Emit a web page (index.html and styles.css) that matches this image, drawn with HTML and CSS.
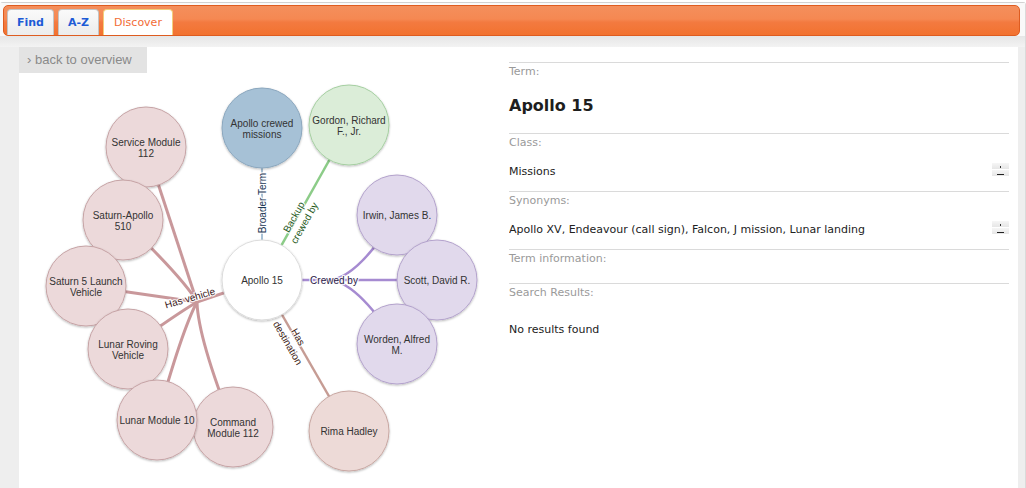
FILE: index.html
```html
<!DOCTYPE html>
<html>
<head>
<meta charset="utf-8">
<title>Discover</title>
<link rel="stylesheet" href="styles.css">
</head>
<body>
<div class="app">
  <div class="top">
    <div class="tabbar">
      <div class="tab tab-find">Find</div>
      <div class="tab tab-az">A-Z</div>
      <div class="tab tab-discover">Discover</div>
    </div>
  </div>
  <div class="main">
    <div class="panel">
      <div class="left">
        <div class="back">› back to overview</div>
        <svg class="graph" viewBox="19 73 490 415" width="490" height="415" xmlns="http://www.w3.org/2000/svg">
          <defs>
            <filter id="sh" x="-30%" y="-30%" width="160%" height="170%">
              <feDropShadow dx="0" dy="1" stdDeviation="1.3" flood-color="#000" flood-opacity="0.28"/>
            </filter>
          </defs>
          <g class="edges">
            <path class="e e-blue" d="M262,128 L262,280"/>
            <path class="e e-green" d="M349,125 L262,280"/>
            <path class="e e-purple" d="M262,280 L437,280"/>
            <path class="e e-purple" d="M328,280 Q356,280 397,215"/>
            <path class="e e-purple" d="M328,280 Q356,280 397,344"/>
            <path class="e e-rose" d="M262,280 L197,302"/>
            <path class="e e-rose" d="M197,302 Q180,250 146,147"/>
            <path class="e e-rose" d="M197,302 Q185,280 123,220"/>
            <path class="e e-rose" d="M197,302 Q170,298 86,286"/>
            <path class="e e-rose" d="M197,302 Q175,315 128,349"/>
            <path class="e e-rose" d="M197,302 Q182,330 157,420"/>
            <path class="e e-rose" d="M197,302 Q198,338 233,427"/>
            <path class="e e-dest" d="M262,280 L349,431"/>
          </g>
          <g class="elabels">
            <text class="el el-blue" transform="translate(262,203) rotate(-90)" text-anchor="middle" dominant-baseline="central">Broader Term</text>
            <text class="el el-green" transform="translate(299,220) rotate(-60.7)" text-anchor="middle"><tspan x="0" y="-2.5">Backup</tspan><tspan x="0" y="9.5">crewed by</tspan></text>
            <text class="el el-purple" x="334" y="280" text-anchor="middle" dominant-baseline="central">Crewed by</text>
            <text class="el el-rose" transform="translate(190,298) rotate(-16)" text-anchor="middle" dominant-baseline="central">Has vehicle</text>
            <text class="el el-dest" transform="translate(293,340) rotate(60)" text-anchor="middle"><tspan x="0" y="-2.5">Has</tspan><tspan x="0" y="9.5">destination</tspan></text>
          </g>
          <g class="nodes">
            <circle class="n n-veh" cx="146" cy="147" r="40"/>
            <circle class="n n-veh" cx="123" cy="220" r="40"/>
            <circle class="n n-veh" cx="86" cy="286" r="40"/>
            <circle class="n n-veh" cx="128" cy="349" r="40"/>
            <circle class="n n-veh" cx="233" cy="427" r="40"/>
            <circle class="n n-veh" cx="157" cy="420" r="40"/>
            <circle class="n n-blue" cx="262" cy="128" r="40"/>
            <circle class="n n-green" cx="349" cy="125" r="40"/>
            <circle class="n n-purple" cx="397" cy="215" r="40"/>
            <circle class="n n-purple" cx="437" cy="280" r="40"/>
            <circle class="n n-purple" cx="397" cy="344" r="40"/>
            <circle class="n n-dest" cx="349" cy="431" r="40"/>
            <circle class="n n-center" cx="262" cy="280" r="40"/>
          </g>
          <g class="nlabels">
            <text class="nl" x="146" y="141.5"><tspan x="146" dy="0">Service Module</tspan><tspan x="146" dy="11.5">112</tspan></text>
            <text class="nl" x="123" y="214.5"><tspan x="123" dy="0">Saturn-Apollo</tspan><tspan x="123" dy="11.5">510</tspan></text>
            <text class="nl" x="86" y="280.5"><tspan x="86" dy="0">Saturn 5 Launch</tspan><tspan x="86" dy="11.5">Vehicle</tspan></text>
            <text class="nl" x="128" y="343.5"><tspan x="128" dy="0">Lunar Roving</tspan><tspan x="128" dy="11.5">Vehicle</tspan></text>
            <text class="nl" x="157" y="420">Lunar Module 10</text>
            <text class="nl" x="233" y="421.5"><tspan x="233" dy="0">Command</tspan><tspan x="233" dy="11.5">Module 112</tspan></text>
            <text class="nl" x="262" y="122.5"><tspan x="262" dy="0">Apollo crewed</tspan><tspan x="262" dy="11.5">missions</tspan></text>
            <text class="nl" x="349" y="119.5"><tspan x="349" dy="0">Gordon, Richard</tspan><tspan x="349" dy="11.5">F., Jr.</tspan></text>
            <text class="nl" x="397" y="215">Irwin, James B.</text>
            <text class="nl" x="437" y="280">Scott, David R.</text>
            <text class="nl" x="397" y="338.5"><tspan x="397" dy="0">Worden, Alfred</tspan><tspan x="397" dy="11.5">M.</tspan></text>
            <text class="nl" x="349" y="431">Rima Hadley</text>
            <text class="nl" x="262" y="280">Apollo 15</text>
          </g>
        </svg>
      </div>
      <div class="right">
        <div class="sec sec-term">
          <div class="lbl">Term:</div>
          <div class="title">Apollo 15</div>
        </div>
        <div class="sec sec-row">
          <div class="lbl">Class:</div>
          <div class="row">
            <span class="val">Missions</span>
            <span class="mini"><span class="mini-top"></span><span class="mini-bot"></span></span>
          </div>
        </div>
        <div class="sec sec-row">
          <div class="lbl">Synonyms:</div>
          <div class="row">
            <span class="val">Apollo XV, Endeavour (call sign), Falcon, J mission, Lunar landing</span>
            <span class="mini"><span class="mini-top"></span><span class="mini-bot"></span></span>
          </div>
        </div>
        <div class="sec sec-info">
          <div class="lbl">Term information:</div>
        </div>
        <div class="sec sec-results">
          <div class="lbl">Search Results:</div>
          <div class="noresults">No results found</div>
        </div>
      </div>
    </div>
  </div>
</div>
</body>
</html>
```
FILE: styles.css
```css
* { box-sizing: border-box; }
html, body { margin: 0; padding: 0; }
body {
  background: #fff;
  width: 1026px;
  height: 488px;
  overflow: hidden;
  font-family: "DejaVu Sans", Verdana, sans-serif;
}
.app {
  margin-top: 2px;
  height: 486px;
  border-top: 1px solid #d2d2d2;
  border-right: 1px solid #dadada;
  border-radius: 3px 3px 0 0;
  background: #eee;
  display: flex;
  flex-direction: column;
}
.top {
  padding: 2px 5px 0 3px;
  background: #f9f9f9;
}
.tabbar {
  height: 31px;
  border: 1px solid #de5c20;
  border-radius: 5px;
  background: linear-gradient(#f48f5c 0%, #f58852 45%, #f37a40 56%, #f2722f 100%);
  display: flex;
  align-items: flex-end;
  gap: 4px;
  padding-left: 3px;
}
.tab {
  height: 26px;
  border: 1px solid #c4c4c4;
  border-bottom: 0;
  border-radius: 4px 4px 0 0;
  background: linear-gradient(#fafafa, #ececec);
  font-size: 11px;
  font-weight: bold;
  color: #1d5bd6;
  text-align: center;
  line-height: 25px;
}
.tab-find { width: 47px; }
.tab-az { width: 41px; }
.tab-discover {
  width: 70px;
  background: #fff;
  border-color: #f2cf7c;
  color: #f26c36;
  font-weight: normal;
}
.main {
  flex: 1;
  padding: 11px 7px 0 19px;
  background: linear-gradient(#e6e6e6 0, #f3f3f3 11px, #eee 11px);
  display: flex;
}
.panel {
  flex: 1;
  background: #fff;
  display: flex;
}
.left {
  width: 490px;
  display: flex;
  flex-direction: column;
}
.back {
  width: 128px;
  height: 26px;
  background: #e3e3e3;
  color: #8a8a8a;
  font-family: "Liberation Sans", Arial, sans-serif;
  font-size: 13px;
  line-height: 26px;
  padding-left: 8px;
}
.graph { display: block; }
.e { fill: none; stroke-width: 2.5; }
.e-blue { stroke: #a7c1d6; stroke-width: 2; }
.e-green { stroke: #8ccc88; }
.e-purple { stroke: #a68bd1; }
.e-rose { stroke: #c9989b; stroke-width: 3; }
.e-dest { stroke: #c69c94; }
.el {
  font-family: "Liberation Sans", Arial, sans-serif;
  font-size: 10px;
  paint-order: stroke;
  stroke: #fff;
  stroke-width: 2.5px;
  stroke-linejoin: round;
  stroke-opacity: 0.85;
}
.el-blue { fill: #1c3856; }
.el-green { fill: #1f5a1c; }
.el-purple { fill: #2b1a47; }
.el-rose { fill: #3d1a1c; }
.el-dest { fill: #3b1b14; }
.n { stroke-width: 1; filter: url(#sh); }
.n-veh { fill: #ecd9da; stroke: #c6a3a5; }
.n-dest { fill: #eddad7; stroke: #c8a7a2; }
.n-blue { fill: #a6c1d6; stroke: #8ba7be; }
.n-green { fill: #dbedd8; stroke: #a5cfa1; }
.n-purple { fill: #e1d9ec; stroke: #b3a2cc; }
.n-center { fill: #fff; stroke: #dcdcdc; }
.nl {
  font-family: "Liberation Sans", Arial, sans-serif;
  font-size: 10px;
  fill: #333;
  text-anchor: middle;
  dominant-baseline: central;
}
.right {
  width: 500px;
  padding-top: 15px;
  font-size: 11px;
  color: #222;
}
.sec { border-top: 1px solid #dadada; }
.lbl {
  color: #9a9a9a;
  line-height: 16px;
  padding-top: 1px;
}
.title {
  margin: 15px 0 16px;
  font-size: 16px;
  font-weight: bold;
  line-height: 22px;
  color: #1e1e1e;
}
.row {
  margin: 13px 0 14px;
  height: 13px;
  display: flex;
  justify-content: space-between;
}
.val {
  height: 13px;
  overflow: hidden;
  line-height: 16px;
  white-space: nowrap;
}
.mini {
  width: 17px;
  height: 13px;
  margin-top: -1px;
  display: flex;
  flex-direction: column;
  gap: 1px;
}
.mini-top {
  flex: 1;
  background: linear-gradient(#f6f6f6, #e6e6e6);
  position: relative;
}
.mini-top::after {
  content: "";
  position: absolute;
  left: 8px;
  top: 3px;
  width: 1px;
  height: 2px;
  background: #333;
}
.mini-bot {
  flex: 1;
  background: linear-gradient(#f6f6f6, #e6e6e6);
  position: relative;
}
.mini-bot::after {
  content: "";
  position: absolute;
  left: 5px;
  bottom: 1px;
  width: 7px;
  height: 1px;
  background: #222;
}
.sec-info .lbl { margin-bottom: 16px; }
.noresults {
  margin-top: 21px;
  line-height: 16px;
}
```
